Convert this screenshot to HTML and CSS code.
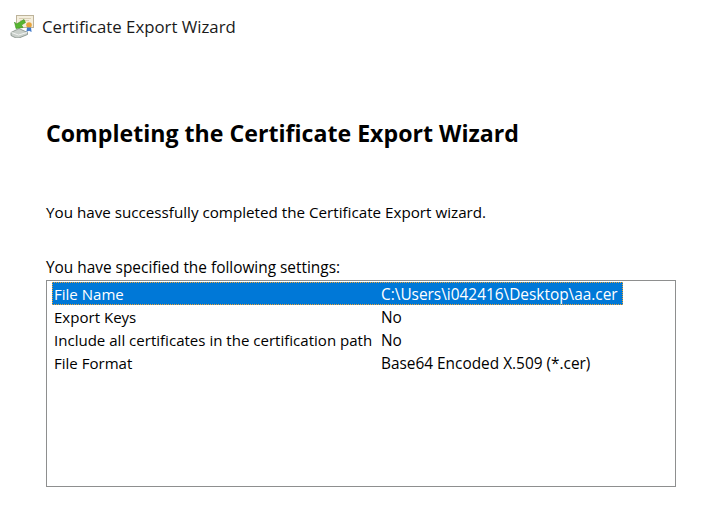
FILE: index.html
```html
<!DOCTYPE html>
<html lang="en">
<head>
<meta charset="utf-8">
<title>Certificate Export Wizard</title>
<link rel="stylesheet" href="styles.css">
</head>
<body>
<header class="titlebar">
  <svg class="app-icon" width="24" height="24" viewBox="0 0 24 24" aria-hidden="true">
    <rect x="6.500" y="1.500" width="17" height="12" fill="#f4eedd" stroke="#bdb39a"/>
    <path d="M9 4.500h12M10 6.500h9M10 8.500h5" stroke="#d9cfb6"/>
    <circle cx="19" cy="11" r="2.800" fill="#e8a33a"/>
    <path d="M17 13.500l-.6 4.500 2.600-1.300 2.600 1.300-.6-4.500z" fill="#3f78c9"/>
    <path d="M1 18.500l8-4 8.500 4v2L9 24H6l-5-2.500z" fill="#c9cfca" stroke="#7f8a84" stroke-width=".8"/>
    <path d="M1.500 18.500l7 2.500 8.500-2.500" fill="none" stroke="#f2f4f2"/>
    <path d="M14 5.500l1.500 3-4 2.500 1.500 2.500-7 1-1.500-6.500 2 2z" fill="#56b52f" stroke="#3c8f1e" stroke-width=".6"/>
  </svg>
  <span class="app-title">Certificate Export Wizard</span>
</header>
<main class="content">
  <h1 class="heading">Completing the Certificate Export Wizard</h1>
  <p class="success">You have successfully completed the Certificate Export wizard.</p>
  <p class="settings-label">You have specified the following settings:</p>
  <div class="listbox">
    <div class="row selected"><span class="name">File Name</span><span class="value">C:\Users\i042416\Desktop\aa.cer</span></div>
    <div class="row"><span class="name">Export Keys</span><span class="value">No</span></div>
    <div class="row"><span class="name">Include all certificates in the certification path</span><span class="value">No</span></div>
    <div class="row"><span class="name">File Format</span><span class="value">Base64 Encoded X.509 (*.cer)</span></div>
  </div>
</main>
</body>
</html>
```

FILE: styles.css
```css
* { box-sizing: border-box; }
html, body { margin: 0; height: 100%; }
body {
  background: #fff;
  color: #000;
  font-family: "Open Sans", "Noto Sans", sans-serif;
  font-size: 15.2px;
  line-height: 23px;
  overflow: hidden;
}
.titlebar {
  display: flex;
  align-items: center;
  gap: 8px;
  height: 28px;
  margin-top: 12px;
  padding-left: 10px;
}
.app-icon { flex: none; }
.app-title { font-size: 16.8px; color: #1a1a1a; }
.content {
  display: flex;
  flex-direction: column;
  padding: 0 28px 0 46px;
}
.heading {
  margin: 77px 0 0;
  font-size: 23.15px;
  line-height: 32px;
  font-weight: 700;
}
.success { margin: 52px 0 0; }
.settings-label { margin: 32px 0 0; font-size: 15.4px; }
.listbox {
  margin-top: 1px;
  height: 207px;
  border: 1px solid #8e8f8f;
  padding-top: 1px;
  padding-left: 5px;
}
.row {
  display: grid;
  grid-template-columns: 327px auto;
  width: 571px;
  height: 23px;
  padding-left: 2px;
  padding-top: 1px;
  white-space: nowrap;
}
.name { font-size: 15.05px; }
.value { font-size: 15.4px; }
.selected {
  background: #0078d7;
  color: #fff;
  outline: 1px dotted #e8a33a;
  outline-offset: -1px;
}
```
